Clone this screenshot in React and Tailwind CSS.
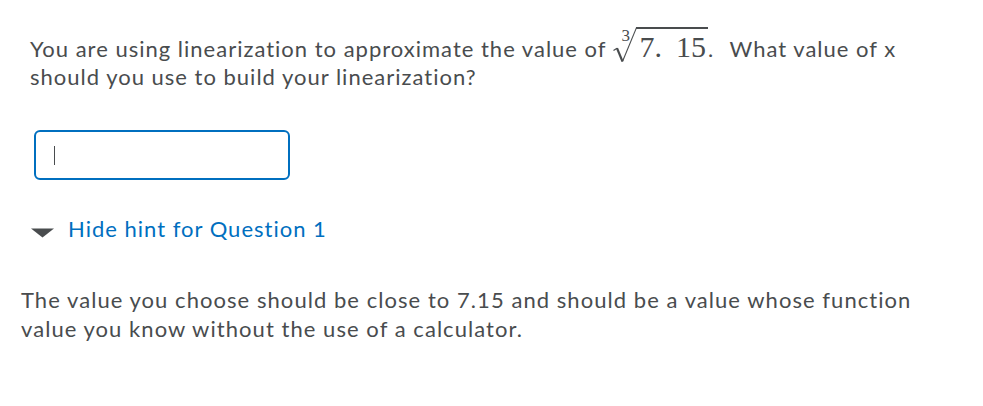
import React from "react";

// cube root of 7.15, drawn like the rendered math in the quiz
const CubeRoot = () => {
  return (
    <span className="relative inline-block ml-[6px] pl-[27px] pr-[2px] align-baseline leading-[20px] text-[30px] text-[#494c4e] tracking-normal font-['Liberation_Serif',serif]">
      <span className="absolute left-[9px] top-[-10px] text-[17px] leading-none">3</span>
      <svg width="24" height="36" viewBox="0 0 24 36" className="absolute left-0 top-[-10px]">
        <path d="M0.5 23.5 L4 21.2" fill="none" stroke="#494c4e" strokeWidth="1.2" />
        <path d="M4 21.2 L9.5 34.5" fill="none" stroke="#494c4e" strokeWidth="2.2" />
        <path d="M9.5 34.5 L23.5 0.6" fill="none" stroke="#494c4e" strokeWidth="1.1" />
      </svg>
      <span className="absolute left-[23px] right-0 top-[-10px] h-[1.5px] bg-[#494c4e]"></span>
      <span>7.</span>
      <span className="ml-[14px]">15</span>
    </span>
  );
};

export default function App() {
  return (
    <div className="w-[983px] h-[406px] bg-white text-[#494c4e] font-['Lato',sans-serif] tracking-[1px]">
      <div className="pt-[35px] pl-[30px] pr-[43px]">
        <p className="text-[22px] leading-[28px] tracking-[1px]">
          You are using linearization to approximate the value of
          <CubeRoot /><span className="mr-[9px]">.</span> What value of x should you use to build your linearization?
        </p>

        <div className="mt-[39px] ml-[4px] w-[256px] h-[50px] border-2 border-[#006fbf] rounded-[6px] flex items-center pl-[18px]">
          <span className="w-[1px] h-[19px] bg-[#494c4e]"></span>
        </div>

        <div className="mt-[35px] flex items-start">
          <svg width="23" height="10" viewBox="0 0 23 10" className="ml-[1px] mt-[13px]">
            <path d="M0 0.5 L23 0.5 L11.5 9.5 Z" fill="#494c4e" />
          </svg>
          <button className="ml-[14px] text-[22px] leading-[28px] text-[#006fbf] tracking-[1px]">
            Hide hint for Question 1
          </button>
        </div>
      </div>

      <p className="mt-[42px] pl-[21px] pr-[43px] text-[22px] leading-[29px] tracking-[1.05px]">
        The value you choose should be close to 7.15 and should be a value whose function value you know without the use of a calculator.
      </p>
    </div>
  );
}
